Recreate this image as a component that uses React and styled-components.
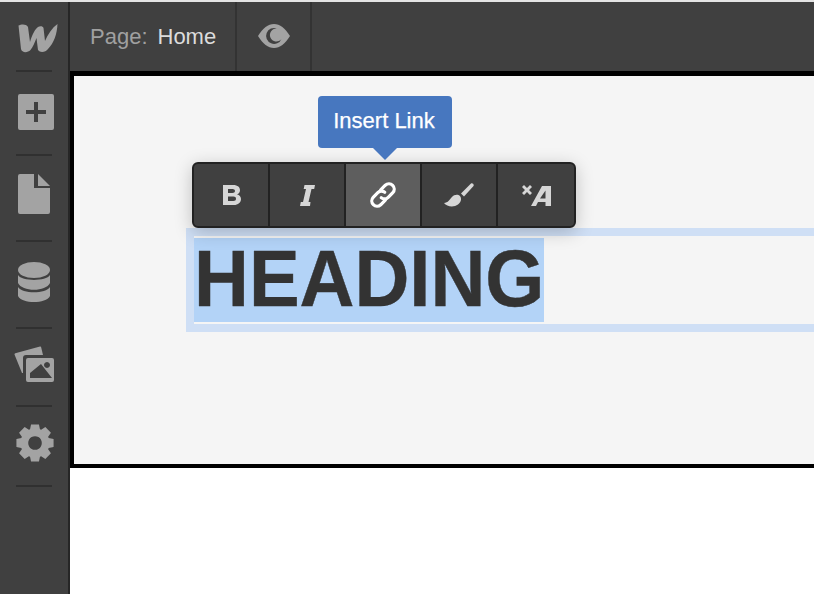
import React from 'react';
import styled, { createGlobalStyle } from 'styled-components';

const GlobalStyle = createGlobalStyle`
  html, body {
    margin: 0;
    height: 100%;
    background: #fff;
    overflow: hidden;
  }
  #root {
    height: 100%;
  }
`;

const Page = styled.div`
  display: flex;
  width: 814px;
  height: 594px;
  overflow: hidden;
  box-sizing: border-box;
  border-top: 2px solid #e4e4e4;
  font-family: "Liberation Sans", Arial, sans-serif;
`;

const Sidebar = styled.nav`
  flex: 0 0 70px;
  box-sizing: border-box;
  background: #404040;
  border-right: 2px solid #262626;
  display: flex;
  flex-direction: column;
`;

const SideCell = styled.div`
  height: ${(p) => p.$height}px;
  box-sizing: border-box;
  padding: ${(p) => p.$top}px 0 0 ${(p) => p.$left}px;
  display: flex;
  align-items: flex-start;
  color: #a3a3a3;
`;

const SideDivider = styled.div`
  height: 2px;
  width: 36px;
  flex: none;
  margin-left: 16px;
  background: #303030;
`;

const Main = styled.div`
  flex: 0 0 900px;
  display: flex;
  flex-direction: column;
`;

const TopBar = styled.header`
  height: 69px;
  flex: none;
  background: #404040;
  display: flex;
`;

const PageTab = styled.div`
  width: 167px;
  box-sizing: border-box;
  padding-left: 20px;
  display: flex;
  align-items: center;
  gap: 10px;
  font-size: 22px;
  border-right: 2px solid #333;
`;

const PageLabel = styled.span`
  color: #a0a0a0;
`;

const PageName = styled.span`
  color: #dcdcdc;
`;

const EyeTab = styled.div`
  width: 75px;
  box-sizing: border-box;
  padding-bottom: 1px;
  display: flex;
  align-items: center;
  justify-content: center;
  color: #a3a3a3;
  border-right: 2px solid #333;
`;

const Canvas = styled.main`
  height: 397px;
  flex: none;
  box-sizing: border-box;
  background: #f5f5f5;
  border: 4px solid #000;
  border-top-width: 5px;
  padding: 152px 0 0 112px;
`;

const HeadingBox = styled.div`
  position: relative;
  box-sizing: border-box;
  height: 104px;
  border: 8px solid #cfdff5;
  padding-top: 2px;
`;

const Heading = styled.h1`
  margin: 0;
  font-size: 76px;
  line-height: 84px;
  font-weight: 700;
  color: #333;
  -webkit-text-stroke: 0.4px #333;
`;

const Selection = styled.span`
  display: inline-block;
  background: #b3d3f7;
`;

const HeadingText = styled.span`
  display: inline-block;
  transform: scaleY(1.05);
  transform-origin: 0 68px;
`;

const Toolbar = styled.div`
  position: absolute;
  left: -2px;
  top: -74px;
  display: flex;
  height: 66px;
  box-sizing: border-box;
  border: 2px solid #222;
  border-radius: 6px;
  overflow: hidden;
  background: #222;
  gap: 2px;
  box-shadow: 0 4px 18px rgba(0, 0, 0, 0.22);
`;

const ToolButton = styled.button`
  width: ${(p) => p.$width}px;
  border: 0;
  padding: 0;
  display: flex;
  align-items: center;
  justify-content: center;
  background: ${(p) => (p.$active ? '#5e5e5e' : '#404040')};
  color: ${(p) => (p.$active ? '#fff' : '#d6d6d6')};
`;

const Tooltip = styled.div`
  position: absolute;
  left: 124px;
  top: -140px;
  width: 134px;
  height: 52px;
  box-sizing: border-box;
  padding: 0 2px 2px 0;
  border-radius: 4px;
  background: #4777bf;
  color: #fff;
  font-size: 22px;
  -webkit-text-stroke: 0.25px #fff;
  display: flex;
  align-items: center;
  justify-content: center;

  &::after {
    content: '';
    position: absolute;
    left: 55px;
    top: 52px;
    border-left: 12px solid transparent;
    border-right: 12px solid transparent;
    border-top: 12px solid #4777bf;
  }
`;

const Icon = ({ w, h, box, children }) => (
  <svg width={w} height={h} viewBox={box || `0 0 ${w} ${h}`} fill="currentColor">
    {children}
  </svg>
);

const LogoIcon = () => (
  <Icon w={40} h={29}>
    <path d="M0.5 1.5 C3 0.3 8 -0.5 10 3 L12 18 C14 11 17 5 20 3 C22 1.5 25 2 25.5 4 L27 17 C30 10 34 4 39.5 0 C39 10 36 19 30 25 C27.5 28.5 22 29 20 26 L18.5 14 C16.5 19 15 23 12.5 26 C9.5 29 4 29 3 25 Z" />
  </Icon>
);

const PlusIcon = () => (
  <Icon w={36} h={36}>
    <path
      fillRule="evenodd"
      d="M2 0 H34 a2 2 0 0 1 2 2 V34 a2 2 0 0 1 -2 2 H2 a2 2 0 0 1 -2 -2 V2 a2 2 0 0 1 2 -2 Z M16 8 V16 H8 V20 H16 V28 H20 V20 H28 V16 H20 V8 Z"
    />
  </Icon>
);

const FileIcon = () => (
  <Icon w={32} h={40}>
    <path d="M2 0 H16 V14 H32 V38 a2 2 0 0 1 -2 2 H2 a2 2 0 0 1 -2 -2 V2 a2 2 0 0 1 2 -2 Z" />
    <path d="M20 0 L32 12 H20 Z" />
  </Icon>
);

const DataIcon = () => (
  <Icon w={32} h={40}>
    <ellipse cx="16" cy="8" rx="16" ry="8" />
    <path d="M0 13 C4 19.5 28 19.5 32 13 V21 C28 30 4 30 0 21 Z" />
    <path d="M0 25 C4 32 28 32 32 25 V34 C28 42 4 42 0 34 Z" />
  </Icon>
);

const AssetsIcon = () => (
  <Icon w={40} h={36}>
    <path d="M0.5 8.5 a1 1 0 0 1 0.8 -1.2 L26 0.6 a1 1 0 0 1 1.2 0.8 L29 9 H12 a3 3 0 0 0 -3 3 V27 H8 Z" />
    <path
      fillRule="evenodd"
      d="M14 12 H38 a2 2 0 0 1 2 2 V34 a2 2 0 0 1 -2 2 H14 a2 2 0 0 1 -2 -2 V14 a2 2 0 0 1 2 -2 Z M16 32 H38 L27 18 L16 27 Z M33 16 a3 3 0 1 0 0.01 0 Z"
    />
  </Icon>
);

// eight evenly spaced teeth round a round hole
const gearPath = () => {
  const point = (deg, r) => {
    const a = (deg * Math.PI) / 180;
    return `${(19 + r * Math.cos(a)).toFixed(2)} ${(19 + r * Math.sin(a)).toFixed(2)}`;
  };
  const teeth = [0, 1, 2, 3, 4, 5, 6, 7].map((i) => {
    const a = i * 45 - 90;
    return `L${point(a - 20, 14.5)} L${point(a - 12, 19)} L${point(a + 12, 19)} L${point(a + 20, 14.5)}`;
  });
  return `M${teeth.join(' ').slice(1)} Z M19 12.2 a6.8 6.8 0 1 0 0.01 0 Z`;
};

const GearIcon = () => (
  <Icon w={38} h={38}>
    <path fillRule="evenodd" d={gearPath()} />
  </Icon>
);

const EyeIcon = () => (
  <Icon w={32} h={24}>
    <path
      fillRule="evenodd"
      d="M0 12 C5 4 10 0 16 0 C22 0 27 4 32 12 C27 20 22 24 16 24 C10 24 5 20 0 12 Z M19 4.5 A8 8 0 1 0 23.5 15 A6.5 6.5 0 1 1 19 4.5 Z"
    />
  </Icon>
);

const BoldIcon = () => (
  <Icon w={20} h={20}>
    <path
      fillRule="evenodd"
      transform="translate(2 0)"
      d="M0 0 H10 C15 0 17 2.5 17 5.2 C17 7.2 16 8.5 14 9.3 C16.5 10 18 11.8 18 14 C18 17.6 15 20 11 20 H0 Z M5 4 V8 H9.5 C11 8 12 7.2 12 6 C12 4.8 11 4 9.5 4 Z M5 11.5 V16 H10.5 C12 16 13 15.2 13 13.8 C13 12.4 12 11.5 10.5 11.5 Z"
    />
  </Icon>
);

const ItalicIcon = () => (
  <Icon w={15} h={21}>
    <path d="M4.5 0 H15 L14.2 4 H11.5 L8.5 17 H10.5 L10 21 H0 L0.8 17 H3 L6 4 H3.7 Z" />
  </Icon>
);

const LinkIcon = () => (
  <Icon w={30} h={30} box="0 0 26 26">
    <g fill="none" stroke="currentColor" strokeWidth="2.8" strokeLinecap="round">
      <path d="M11 8.5 L15 4.5 a4.6 4.6 0 0 1 6.5 6.5 L17.5 15 a4.6 4.6 0 0 1 -6 0.4" />
      <path d="M15 17.5 L11 21.5 a4.6 4.6 0 0 1 -6.5 -6.5 L8.5 11 a4.6 4.6 0 0 1 6 -0.4" />
    </g>
  </Icon>
);

const BrushIcon = () => (
  <Icon w={30} h={24}>
    <path d="M27 0.5 C28.5 -0.3 30.3 1.5 29.5 3 L20 13.5 L17 10.5 Z" />
    <path d="M0 20 C4 20 6 16 8 14 C10 11.5 14 11 16 13 C18 15.5 17 19 14 21.5 C10 24.5 3 24 0 20 Z" />
  </Icon>
);

const ClearIcon = () => (
  <Icon w={30} h={22}>
    <path d="M1 3 L3 1 L6 4 L9 1 L11 3 L8 6 L11 9 L9 11 L6 8 L3 11 L1 9 L4 6 Z" />
    <path
      fillRule="evenodd"
      d="M21 2 H30 V22 H24.5 V18 H17 L15 22 H10 Z M19 14.5 H24.5 V6.5 Z"
    />
  </Icon>
);

export default function App() {
  return (
    <Page>
      <GlobalStyle />
      <Sidebar>
        <SideCell $height={68} $top={22} $left={18}><LogoIcon /></SideCell>
        <SideDivider />
        <SideCell $height={82} $top={22} $left={18}><PlusIcon /></SideCell>
        <SideDivider />
        <SideCell $height={84} $top={18} $left={18}><FileIcon /></SideCell>
        <SideDivider />
        <SideCell $height={85} $top={20} $left={18}><DataIcon /></SideCell>
        <SideDivider />
        <SideCell $height={76} $top={17} $left={14}><AssetsIcon /></SideCell>
        <SideDivider />
        <SideCell $height={78} $top={17} $left={16}><GearIcon /></SideCell>
        <SideDivider />
      </Sidebar>
      <Main>
        <TopBar>
          <PageTab>
            <PageLabel>Page:</PageLabel>
            <PageName>Home</PageName>
          </PageTab>
          <EyeTab><EyeIcon /></EyeTab>
        </TopBar>
        <Canvas>
          <HeadingBox>
            <Heading>
              <Selection><HeadingText>HEADING</HeadingText></Selection>
            </Heading>
            <Toolbar>
              <ToolButton $width={74}><BoldIcon /></ToolButton>
              <ToolButton $width={74}><ItalicIcon /></ToolButton>
              <ToolButton $width={74} $active><LinkIcon /></ToolButton>
              <ToolButton $width={74}><BrushIcon /></ToolButton>
              <ToolButton $width={76}><ClearIcon /></ToolButton>
            </Toolbar>
            <Tooltip>Insert Link</Tooltip>
          </HeadingBox>
        </Canvas>
      </Main>
    </Page>
  );
}
